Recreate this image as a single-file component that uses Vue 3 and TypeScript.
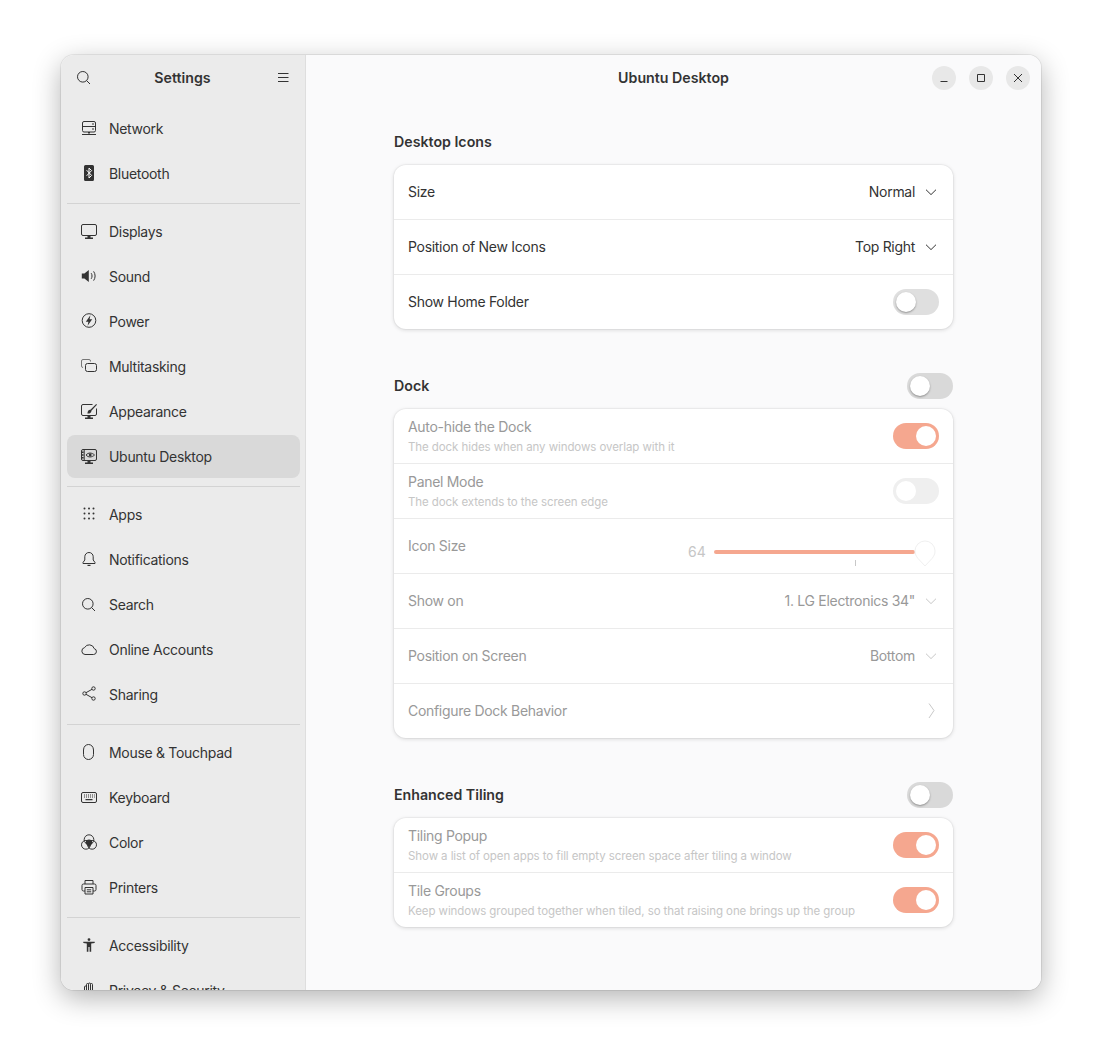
<script setup lang="ts">
interface Glyph {
  s?: string[] // stroked
  f?: string[] // filled
  o?: string[] // faded strokes
  w?: string[] // white strokes, over a fill
}

const circle = (x: number, y: number, r: number) =>
  `M${x - r} ${y}a${r} ${r} 0 1 0 ${r * 2} 0a${r} ${r} 0 1 0 ${-r * 2} 0z`

const monitor = 'M2 1.500h12A1.500 1.500 0 0 1 15.500 3v8a1.500 1.500 0 0 1-1.500 1.500H2A1.500 1.500 0 0 1 .5 11V3A1.500 1.500 0 0 1 2 1.500z'
const stand = 'M6.500 13h3v1.500H12V16H4v-1.500h2.500z'

const glyphs: Record<string, Glyph> = {
  search: { s: [circle(6.8, 7.8, 5.3), 'M10.600 11.600l3.400 3.400'] },
  network: {
    s: ['M3 1.500h10A1.500 1.500 0 0 1 14.500 3v7.500A1.500 1.500 0 0 1 13 12H3a1.500 1.500 0 0 1-1.500-1.500V3A1.500 1.500 0 0 1 3 1.500zM1.500 6.500h13M1 14.500h14'],
    f: ['M11 3.500h2v1h-2zM11 8.500h2v1h-2zM7 12h2v1.500H7z'],
  },
  bluetooth: {
    f: ['M4.500 0h7A1.500 1.500 0 0 1 13 1.500v13a1.500 1.500 0 0 1-1.500 1.500h-7A1.500 1.500 0 0 1 3 14.500v-13A1.500 1.500 0 0 1 4.500 0z'],
    w: ['M5.600 5.200l5 5.200L8 13V3l2.600 2.600-5 5.200'],
  },
  displays: { s: [monitor], f: [stand] },
  sound: {
    f: ['M.8 5.500h2.600L7.800 2v12L3.400 10.500H.8z'],
    s: ['M10.200 5.200c1.100 1.700 1.100 3.900 0 5.600M12.600 3.400c2 2.700 2 6.500 0 9.200'],
  },
  power: { s: [circle(8, 7.5, 6.8)], f: ['M9.400 2.300L4.800 8.700h2.600L6.600 12.700 11.200 6.300H8.600z'] },
  multitasking: {
    s: ['M6.500 5.500h7a2 2 0 0 1 2 2v4a2 2 0 0 1-2 2h-7a2 2 0 0 1-2-2v-4a2 2 0 0 1 2-2z'],
    o: ['M2 9.500A1.500 1.500 0 0 1 .5 8V3A1.500 1.500 0 0 1 2 1.500h6A1.500 1.500 0 0 1 9.500 3v.5'],
  },
  appearance: {
    s: ['M11.500 1.500H2A1.500 1.500 0 0 0 .5 3v8A1.500 1.500 0 0 0 2 12.500h12a1.500 1.500 0 0 0 1.500-1.500V5.500'],
    f: [stand, 'M15.200 1L16 1.800l-5.600 6c.1 1.900-1.500 3-4 2.800.2-2.500 1.200-4 3-3.800z'],
  },
  ubuntu: {
    s: [monitor, 'M5 7c2.200-2.600 5.800-2.600 8.500 0-2.700 2.600-6.300 2.600-8.500 0zM3.200 1.500v11'],
    f: [stand, circle(9.2, 7, 1.4), 'M1 3.500h1.600v1.400H1zM1 6.300h1.600v1.400H1zM1 9.100h1.600v1.400H1z'],
  },
  apps: {
    f: [3, 8, 13].flatMap((y) => [3.5, 8, 12.5].map((x) => circle(x, y - 0.5, 1))),
  },
  notifications: {
    s: ['M8 1.500a4.200 4.200 0 0 0-4.200 4.200V9L2 11.500v1h12v-1L12.200 9V5.700A4.200 4.200 0 0 0 8 1.500z'],
    f: ['M6.500 13.800h3v1.200h-3z'],
  },
  cloud: { s: ['M4 13.500h8.500a3 3 0 0 0 .7-5.900A5.200 5.200 0 0 0 3.600 6.600 3.500 3.500 0 0 0 4 13.500z'] },
  sharing: {
    s: [circle(3.5, 7.5, 1.7), circle(12.5, 2.5, 1.7), circle(12.5, 12.5, 1.7), 'M5 6.700l6-3.400M5 8.300l6 3.400'],
  },
  mouse: { s: ['M7.500 .5C5 .5 2.500 2.500 2.500 6v4.500c0 3 2.500 5 5 5s5-2 5-5V6c0-3.500-2.500-5.500-5-5.500z'] },
  keyboard: {
    s: ['M2 3.500h12a1.500 1.500 0 0 1 1.500 1.500v7a1.500 1.500 0 0 1-1.500 1.500H2A1.500 1.500 0 0 1 .5 12V5A1.500 1.500 0 0 1 2 3.500z'],
    f: [
      'M3 5.500h1v1H3zM5 5.500h1v1H5zM7 5.500h1v1H7zM9 5.500h1v1H9zM11 5.500h1v1h-1zM13 5.500h.8v1H13z',
      'M3 7.500h1v1H3zM5 7.500h1v1H5zM7 7.500h1v1H7zM9 7.500h1v1H9zM11 7.500h1v1h-1zM13 7.500h.8v1H13z',
      'M4.500 10h7v1.200h-7z',
    ],
  },
  color: {
    s: [circle(8, 5.6, 4.8), circle(4.9, 10.8, 4.4), circle(11.1, 10.8, 4.4)],
    f: ['M5.200 6.400a5 5 0 0 1 5.600 0l.7 2.800-3.500 4.300-3.500-4.300z'],
  },
  printers: {
    s: [
      'M4 5V1.500h8V5',
      'M4 12H2.500A1.500 1.500 0 0 1 1 10.500v-4A1.500 1.500 0 0 1 2.500 5h11A1.500 1.500 0 0 1 15 6.500v4a1.500 1.500 0 0 1-1.500 1.500H12',
      'M4 8.500h8v6.500H4zM5.800 10.800h4.400M5.800 12.800h4.400',
    ],
  },
  accessibility: {
    f: [circle(8, 2.6, 1.4), 'M2.300 4.800h11.400v1.300l-3.500.5V14.700H8.600v-4.700H7.400v4.700H5.800V6.600L2.300 6.100z'],
  },
  privacy: {
    s: ['M3.500 10V5a1 1 0 0 1 2 0V2.500a1 1 0 0 1 2 0V2a1 1 0 0 1 2 0v.5a1 1 0 0 1 2 0V10M5.500 5v4M7.500 2.500V8M9.500 2.500V8'],
  },
}

const navGroups = [
  [
    { label: 'Network', icon: 'network' },
    { label: 'Bluetooth', icon: 'bluetooth' },
  ],
  [
    { label: 'Displays', icon: 'displays' },
    { label: 'Sound', icon: 'sound' },
    { label: 'Power', icon: 'power' },
    { label: 'Multitasking', icon: 'multitasking' },
    { label: 'Appearance', icon: 'appearance' },
    { label: 'Ubuntu Desktop', icon: 'ubuntu', active: true },
  ],
  [
    { label: 'Apps', icon: 'apps' },
    { label: 'Notifications', icon: 'notifications' },
    { label: 'Search', icon: 'search' },
    { label: 'Online Accounts', icon: 'cloud' },
    { label: 'Sharing', icon: 'sharing' },
  ],
  [
    { label: 'Mouse & Touchpad', icon: 'mouse' },
    { label: 'Keyboard', icon: 'keyboard' },
    { label: 'Color', icon: 'color' },
    { label: 'Printers', icon: 'printers' },
  ],
  [
    { label: 'Accessibility', icon: 'accessibility' },
    { label: 'Privacy & Security', icon: 'privacy' },
  ],
]

type Row = {
  title: string
  sub?: string
  value?: string
  kind: 'select' | 'toggle' | 'slider' | 'link'
  on?: boolean
}

const sections: { title: string; toggle: boolean; dim: boolean; rows: Row[] }[] = [
  {
    title: 'Desktop Icons',
    toggle: false,
    dim: false,
    rows: [
      { title: 'Size', value: 'Normal', kind: 'select' },
      { title: 'Position of New Icons', value: 'Top Right', kind: 'select' },
      { title: 'Show Home Folder', kind: 'toggle', on: false },
    ],
  },
  {
    title: 'Dock',
    toggle: true,
    dim: true,
    rows: [
      { title: 'Auto-hide the Dock', sub: 'The dock hides when any windows overlap with it', kind: 'toggle', on: true },
      { title: 'Panel Mode', sub: 'The dock extends to the screen edge', kind: 'toggle', on: false },
      { title: 'Icon Size', value: '64', kind: 'slider' },
      { title: 'Show on', value: '1. LG Electronics 34"', kind: 'select' },
      { title: 'Position on Screen', value: 'Bottom', kind: 'select' },
      { title: 'Configure Dock Behavior', kind: 'link' },
    ],
  },
  {
    title: 'Enhanced Tiling',
    toggle: true,
    dim: true,
    rows: [
      { title: 'Tiling Popup', sub: 'Show a list of open apps to fill empty screen space after tiling a window', kind: 'toggle', on: true },
      { title: 'Tile Groups', sub: 'Keep windows grouped together when tiled, so that raising one brings up the group', kind: 'toggle', on: true },
    ],
  },
]
</script>

<template>
  <div class="desktop">
    <div class="window">
      <aside class="sidebar">
        <header class="side-head">
          <svg class="glyph" viewBox="0 0 16 16">
            <path v-for="d in glyphs.search.s" :key="d" :d="d" class="stroke" />
          </svg>
          <span class="head-title">Settings</span>
          <svg class="glyph" viewBox="0 0 16 16">
            <path d="M5 4.500h10.500M5 8.500h10.500M5 12.500h10.500" class="stroke" />
          </svg>
        </header>
        <nav class="nav">
          <template v-for="(group, i) in navGroups" :key="i">
            <div v-if="i > 0" class="nav-sep"></div>
            <div v-for="item in group" :key="item.label" class="nav-item" :class="{ active: item.active }">
              <svg class="glyph" viewBox="0 0 16 16">
                <path v-for="d in glyphs[item.icon].f" :key="d" :d="d" class="fill" />
                <path v-for="d in glyphs[item.icon].s" :key="d" :d="d" class="stroke" />
                <path v-for="d in glyphs[item.icon].o" :key="d" :d="d" class="stroke faded" />
                <path v-for="d in glyphs[item.icon].w" :key="d" :d="d" class="stroke white" />
              </svg>
              <span>{{ item.label }}</span>
            </div>
          </template>
        </nav>
      </aside>

      <main class="main">
        <header class="main-head">
          <span class="head-title">Ubuntu Desktop</span>
          <div class="win-buttons">
            <button class="win-btn">
              <svg viewBox="0 0 16 16"><path d="M4.500 11.500h7" class="stroke" /></svg>
            </button>
            <button class="win-btn">
              <svg viewBox="0 0 16 16"><path d="M4.500 4.500h7v7h-7z" class="stroke" /></svg>
            </button>
            <button class="win-btn">
              <svg viewBox="0 0 16 16"><path d="M4 4l8 8M12 4l-8 8" class="stroke" /></svg>
            </button>
          </div>
        </header>

        <div class="content">
          <section v-for="sec in sections" :key="sec.title" class="section">
            <div class="sec-head" :class="{ 'with-toggle': sec.toggle }">
              <h2>{{ sec.title }}</h2>
              <span v-if="sec.toggle" class="switch strong"><i></i></span>
            </div>
            <div class="card" :class="{ dim: sec.dim }">
              <div v-for="row in sec.rows" :key="row.title" class="row">
                <div class="row-text" :class="{ lifted: !row.sub, 'two-line': row.sub }">
                  <div class="row-title">{{ row.title }}</div>
                  <div v-if="row.sub" class="row-sub">{{ row.sub }}</div>
                </div>

                <template v-if="row.kind === 'select'">
                  <span class="value">{{ row.value }}</span>
                  <svg class="chev" viewBox="0 0 16 16"><path d="M3 5.700l5 4.900 5-4.900" class="stroke" /></svg>
                </template>

                <span v-else-if="row.kind === 'toggle'" class="switch" :class="{ on: row.on }"><i></i></span>

                <div v-else-if="row.kind === 'slider'" class="slider">
                  <span class="slider-num">{{ row.value }}</span>
                  <div class="track">
                    <span class="mark"></span>
                    <svg class="thumb" viewBox="0 0 22 28">
                      <path d="M1 11a10 10 0 0 1 20 0c0 3-1 5-3 7.500l-7 7.500-7-7.500C2 16 1 14 1 11z" />
                    </svg>
                  </div>
                </div>

                <svg v-else class="chev" viewBox="0 0 16 16"><path d="M6 .5l5 7-5 7.500" class="stroke" /></svg>
              </div>
            </div>
          </section>
        </div>
      </main>
    </div>
  </div>
</template>

<style>
html,
body {
  margin: 0;
  background: #fff;
}
</style>

<style scoped>
.desktop {
  width: 1102px;
  height: 1057px;
  box-sizing: border-box;
  padding: 55px 61px 67px;
  font-family: Inter, "Noto Sans", sans-serif;
  font-size: 14px;
  letter-spacing: -0.3px;
  color: #333;
}

.window {
  display: flex;
  height: 100%;
  border-radius: 13px;
  overflow: hidden;
  box-shadow: 0 0 0 1px rgba(0, 0, 0, 0.07), 0 8px 28px rgba(0, 0, 0, 0.3);
}

.sidebar {
  width: 245px;
  flex: none;
  box-sizing: border-box;
  background: #ebebeb;
  border-right: 1px solid #dedede;
  overflow: hidden;
}

.side-head {
  height: 44px;
  display: flex;
  align-items: center;
  justify-content: space-between;
  padding: 0 16px 0 15px;
}

.head-title {
  font-size: 14.2px;
  letter-spacing: 0;
  font-weight: 600;
}

.glyph {
  width: 16px;
  height: 16px;
  flex: none;
}

.stroke {
  fill: none;
  stroke: #333;
  stroke-width: 1;
}

.stroke.faded {
  stroke: #777;
}

.stroke.white {
  stroke: #fff;
}

.fill {
  fill: #333;
}

.nav {
  padding: 8px 5px 0 6px;
}

.nav-item {
  height: 43px;
  margin-bottom: 2px;
  display: flex;
  align-items: center;
  gap: 12px;
  padding: 0 14px;
  border-radius: 8px;
}

.nav-item .glyph {
  margin-bottom: 1px;
}

.nav-item.active {
  background: #d9d9d9;
}

.nav-sep {
  height: 1px;
  background: #d3d3d3;
  margin: 8px 0 6px;
}

.main {
  flex: 1;
  min-width: 0;
  background: #fafafb;
  display: flex;
  flex-direction: column;
}

.main-head {
  height: 44px;
  flex: none;
  position: relative;
  display: flex;
  align-items: center;
  justify-content: center;
}

.win-buttons {
  position: absolute;
  right: 11px;
  top: 11px;
  display: flex;
  gap: 13px;
}

.win-btn {
  width: 24px;
  height: 24px;
  padding: 0;
  border: none;
  border-radius: 50%;
  background: #e8e8e8;
  display: flex;
  align-items: center;
  justify-content: center;
}

.win-btn svg {
  width: 16px;
  height: 16px;
}

.content {
  width: 559px;
  margin: 0 auto;
  padding-top: 31px;
}

.section {
  margin-bottom: 44px;
}

.sec-head {
  display: flex;
  justify-content: space-between;
  align-items: flex-start;
  height: 21px;
  margin-bottom: 14px;
}

.sec-head.with-toggle {
  height: 26px;
  margin-bottom: 10px;
}

.sec-head h2 {
  margin: 0;
  font-size: 14.2px;
  letter-spacing: 0;
  line-height: 24px;
  font-weight: 600;
}

.sec-head.with-toggle h2 {
  line-height: 26px;
}

.card {
  background: #fff;
  border-radius: 12px;
  box-shadow: 0 0 0 1px rgba(0, 0, 0, 0.03), 0 1px 4px rgba(0, 0, 0, 0.14);
  overflow: hidden;
}

.row {
  height: 54px;
  display: flex;
  align-items: center;
  padding: 0 14px;
  border-top: 1px solid #ebebeb;
}

.row:first-child {
  border-top: none;
}

.row-text {
  flex: 1;
  min-width: 0;
}

.row-text.lifted,
.value {
  padding-bottom: 2px;
}

.row-text.two-line {
  padding-bottom: 1px;
}

.row-sub {
  font-size: 11.5px;
  letter-spacing: -0.08px;
  margin-top: 5px;
  color: #999;
}

.value {
  margin-right: 8px;
}

.chev {
  width: 16px;
  height: 16px;
  flex: none;
}

.dim .row-title,
.dim .value {
  color: #999;
}

.dim .row-sub,
.dim .slider-num {
  color: #c6c6c6;
}

.dim .chev .stroke {
  stroke: #c8c8c8;
}

.switch {
  width: 46px;
  height: 26px;
  box-sizing: border-box;
  padding: 3px;
  border-radius: 13px;
  background: #dfdfdf;
  display: flex;
  flex: none;
}

.switch i {
  width: 20px;
  height: 20px;
  border-radius: 50%;
  background: #fff;
  box-shadow: 0 1px 2px rgba(0, 0, 0, 0.35);
}

.switch.strong {
  background: #d9d9d9;
}

.switch.on {
  background: #f5a78f;
  justify-content: flex-end;
}

.dim .switch i {
  box-shadow: none;
}

.dim .switch:not(.on) {
  background: #efefef;
}

.slider {
  display: flex;
  align-items: center;
  margin-top: 12px;
  width: 251px;
}

.slider-num {
  width: 26px;
  font-size: 14px;
  letter-spacing: 0;
  margin-bottom: 2px;
}

.track {
  position: relative;
  width: 201px;
  height: 4px;
  border-radius: 2px;
  background: #f5a78f;
}

.mark {
  position: absolute;
  left: 141px;
  top: 10px;
  width: 1px;
  height: 6px;
  background: #c8c8c8;
}

.thumb {
  position: absolute;
  left: 200px;
  top: -10px;
  width: 22px;
  height: 28px;
}

.thumb path {
  fill: #fff;
  stroke: #f0f0f0;
  stroke-width: 1;
}
</style>
